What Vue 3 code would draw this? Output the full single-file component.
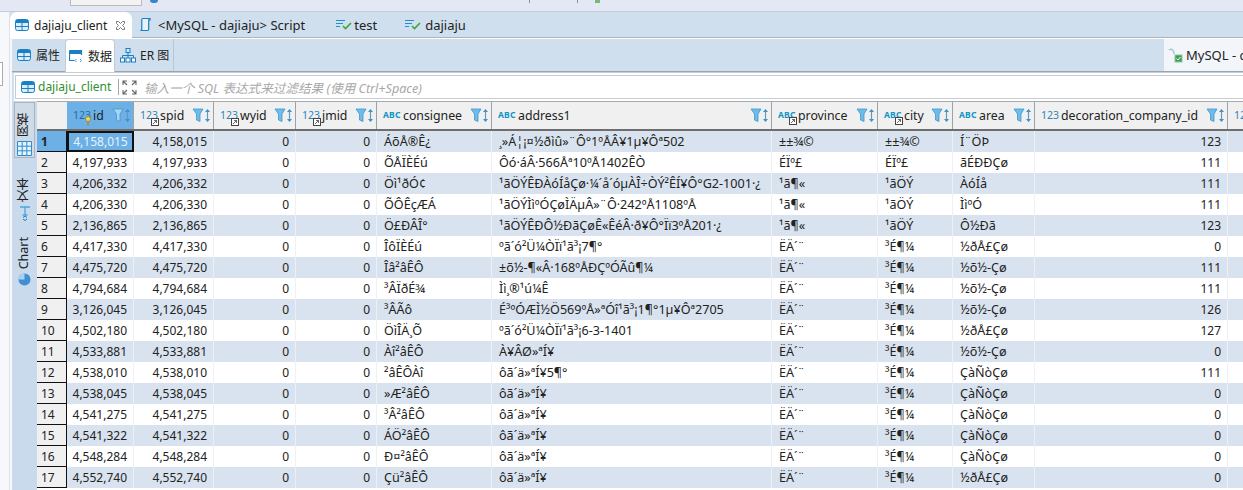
<script setup>
const columns = [
  { name: 'id', type: '123', mark: 'key', width: 67, num: true },
  { name: 'spid', type: '123', mark: 'box', width: 80, num: true },
  { name: 'wyid', type: '123', mark: 'box', width: 82, num: true },
  { name: 'jmid', type: '123', mark: 'box', width: 81, num: true },
  { name: 'consignee', type: 'ABC', width: 115 },
  { name: 'address1', type: 'ABC', width: 280 },
  { name: 'province', type: 'ABC', mark: 'box', width: 106 },
  { name: 'city', type: 'ABC', mark: 'box', width: 75 },
  { name: 'area', type: 'ABC', width: 82 },
  { name: 'decoration_company_id', type: '123', width: 193, num: true }
]
const gridTemplate = '30px ' + columns.map(c => c.width + 'px').join(' ') + ' 60px'

const sc = ['ËÄ´¨', '³É¶¼']
const gz = ['¹ã¶«', '¹ãÖÝ']
const rows = [
  ['4,158,015', 'ÁõÅ®Ê¿', '¸»Á¦¡¤½ðìû»¨Ô°1ºÅÂ¥1µ¥Ôª502', '±±¾©', '±±¾©', 'Í¨ÖÞ', '123'],
  ['4,197,933', 'ÕÅÏÈÉú', 'Ôó·áÂ·566Åª10ºÅ1402ÊÒ', 'ÉÏº£', 'ÉÏº£', 'ãÉÐÐÇø', '111'],
  ['4,206,332', 'Öì¹ðÓ¢', '¹ãÖÝÊÐÀóÍåÇø·¼´å´óµÀÎ÷ÒÝ²ÊÍ¥Ô°G2-1001·¿', ...gz, 'ÀóÍå', '111'],
  ['4,206,330', 'ÕÔÊçÆÁ', '¹ãÖÝÌìºÓÇøÌÄµÂ»¨Ô·242ºÅ1108ºÅ', ...gz, 'ÌìºÓ', '111'],
  ['2,136,865', 'Ö£ÐÂÎ°', '¹ãÖÝÊÐÔ½ÐãÇøÊ«ÊéÂ·ð¥Ô°Ïï3ºÅ201·¿', ...gz, 'Ô½Ðã', '123'],
  ['4,417,330', 'ÎôÏÈÉú', 'ºã´ó²Ü¼ÒÏï¹ã³¡7¶°', ...sc, '½ðÅ£Çø', '0'],
  ['4,475,720', 'Îâ²âÊÔ', '±õ½-¶«Â·168ºÅÐÇºÓÃû¶¼', ...sc, '½õ½-Çø', '111'],
  ['4,794,684', '³ÂÏðÉ¾', 'Ìì¸®¹ú¼Ê', ...sc, '½õ½-Çø', '111'],
  ['3,126,045', '³ÂÃô', 'É³ºÓÆÌ½Ö569ºÅ»ªÓî¹ã³¡1¶°1µ¥Ôª2705', ...sc, '½õ½-Çø', '126'],
  ['4,502,180', 'ÖìÎÄ¸Õ', 'ºã´ó²Ü¼ÒÏï¹ã³¡6-3-1401', ...sc, '½ðÅ£Çø', '127'],
  ['4,533,881', 'Àî²âÊÔ', 'À¥ÂØ»ªÍ¥', ...sc, '½õ½-Çø', '0'],
  ['4,538,010', '²âÊÔÀî', 'ôã´ä»ªÍ¥5¶°', ...sc, 'ÇàÑòÇø', '111'],
  ['4,538,045', '»Æ²âÊÔ', 'ôã´ä»ªÍ¥', ...sc, 'ÇàÑòÇø', '0'],
  ['4,541,275', '³Â²âÊÔ', 'ôã´ä»ªÍ¥', ...sc, 'ÇàÑòÇø', '0'],
  ['4,541,322', 'ÁÖ²âÊÔ', 'ôã´ä»ªÍ¥', ...sc, 'ÇàÑòÇø', '0'],
  ['4,548,284', 'Ð¤²âÊÔ', 'ôã´ä»ªÍ¥', ...sc, 'ÇàÑòÇø', '0'],
  ['4,552,740', 'Çü²âÊÔ', 'ôã´ä»ªÍ¥', ...sc, '½ðÅ£Çø', '0']
]
const tableRows = rows.map(r => [r[0], r[0], '0', '0', r[1], r[2], r[3], r[4], r[5], r[6]])
</script>

<template>
  <div class="page">
    <div class="toolbar">
      <span class="tool-field"></span>
      <span class="tool-dot"></span>
      <span class="tool-sep"></span>
      <span class="tool-sep second"></span>
      <span class="tool-green"></span>
    </div>
    <div class="body">
      <div class="gutter"><span class="gutter-box"></span></div>
      <div class="main">
        <div class="tabs">
          <div class="tab active">
            <svg class="ic" width="14" height="12" viewBox="0 0 14 12"><rect x=".5" y=".5" width="13" height="11" rx="2" fill="#d8ecfa" stroke="#1b7fc4"/><rect x="1" y="1" width="12" height="3" fill="#1b7fc4"/><path d="M1 7.5h12M7 4v7" stroke="#1b7fc4"/></svg>
            <span class="tab-label">dajiaju_client</span>
            <svg class="close" width="11" height="11" viewBox="0 0 11 11"><path d="M1.500 1.500h2l2 2 2-2h2v2l-2 2 2 2v2h-2l-2-2-2 2h-2v-2l2-2-2-2z" fill="none" stroke="#777"/></svg>
          </div>
          <div class="tab script">
            <svg class="ic" width="12" height="15" viewBox="0 0 13 15"><path d="M4 1h8v1.500h-1.500v10a1.500 1.500 0 0 1-1.500 1.500H1.500a1.500 1.500 0 0 0 1.500-1.500V2.500A1.500 1.500 0 0 1 4 1z" fill="#e6f3fb" stroke="#1b7fc4" stroke-width="1.300"/></svg>
            <span>&lt;MySQL - dajiaju&gt; Script</span>
          </div>
          <div class="tab test">
            <svg class="ic" width="16" height="11" viewBox="0 0 16 11"><path d="M0 1.500h9M0 4.500h7M0 7.500h4" stroke="#1f8fd0" stroke-width="1.200"/><path d="M7 7l2.500 2.500L15 4" fill="none" stroke="#3aa53a" stroke-width="1.600"/></svg>
            <span>test</span>
          </div>
          <div class="tab db">
            <svg class="ic" width="16" height="11" viewBox="0 0 16 11"><path d="M0 1.500h9M0 4.500h7M0 7.500h4" stroke="#1f8fd0" stroke-width="1.200"/><path d="M7 7l2.500 2.500L15 4" fill="none" stroke="#3aa53a" stroke-width="1.600"/></svg>
            <span>dajiaju</span>
          </div>
        </div>
        <div class="lower">
          <div class="subtabs">
            <div class="subtab">
              <svg class="ic" width="14" height="12" viewBox="0 0 14 12"><rect x=".5" y=".5" width="13" height="11" rx="2" fill="#d8ecfa" stroke="#1b7fc4"/><rect x="1" y="1" width="12" height="3" fill="#1b7fc4"/><path d="M1 7.500h12M7 4v7" stroke="#1b7fc4"/></svg>
              <span>属性</span>
            </div>
            <div class="subtab current">
              <svg class="ic" width="14" height="13" viewBox="0 0 14 13"><path d="M.5.500h12v4.500M.5.500v10h5" fill="none" stroke="#1b7fc4" stroke-width="1.200"/><rect x="1" y="1" width="11" height="3" fill="#1b7fc4"/><path d="M7.500 9 6 10.500 7.500 12M11 9l1.500 1.500L11 12" fill="none" stroke="#3a9ad9"/></svg>
              <span>数据</span>
            </div>
            <div class="subtab er">
              <svg class="ic" width="16" height="15" viewBox="0 0 16 15"><rect x="6" y=".5" width="4" height="4" fill="#cfe6f7" stroke="#1b7fc4"/><path d="M8 4.500v3M2.500 10V7.500h11V10M8 7.500V10" fill="none" stroke="#1b7fc4"/><rect x=".5" y="10" width="4" height="4" fill="#fff" stroke="#1b7fc4"/><rect x="6" y="10" width="4" height="4" fill="#fff" stroke="#1b7fc4"/><rect x="11.500" y="10" width="4" height="4" fill="#fff" stroke="#1b7fc4"/></svg>
              <span>ER 图</span>
            </div>
            <div class="sub-rest"></div>
            <div class="conn">
              <svg class="ic" width="15" height="15" viewBox="0 0 15 15"><path d="M1 2c3-2 5 0 5 4" fill="none" stroke="#a9c4d4" stroke-width="1.500"/><rect x="7" y="7" width="7" height="7" fill="#3f9f55" stroke="#8fc79c"/><path d="M8.500 10.500l1.500 1.500 2.500-3" fill="none" stroke="#fff"/></svg>
              <span>MySQL - dajiaju</span>
            </div>
          </div>
          <div class="content">
            <div class="filter">
              <svg class="ic" width="14" height="12" viewBox="0 0 14 12"><rect x=".5" y=".5" width="13" height="11" rx="2" fill="#d8ecfa" stroke="#1b7fc4"/><rect x="1" y="1" width="12" height="3" fill="#1b7fc4"/><path d="M1 7.500h12M7 4v7" stroke="#1b7fc4"/></svg>
              <span class="filter-name">dajiaju_client</span>
              <span class="filter-sep"></span>
              <svg class="ic" width="15" height="15" viewBox="0 0 15 15"><path d="M1 5V1h4M10 1h4v4M1 10v4h4M14 10v4h-4M1 1l4 4M14 1l-4 4M1 14l4-4M14 14l-4-4" fill="none" stroke="#666" stroke-width="1.100"/></svg>
              <span class="filter-hint">输入一个 SQL 表达式来过滤结果 (使用 Ctrl+Space)</span>
            </div>
            <div class="grid-area">
              <div class="side">
                <div class="side-tab selected">
                  <svg width="15" height="15" viewBox="0 0 15 15"><path d="M.5.500h14v14H.5zM.5 5.200h14M.5 9.800h14M5.200.500v14M9.800.500v14" fill="#e6f3fb" stroke="#2d8fd0"/></svg>
                  <span class="side-text">网格</span>
                </div>
                <div class="side-tab text-tab">
                  <svg width="12" height="15" viewBox="0 0 12 15"><path d="M1 1h10M6 1v8M3.500 9h5" fill="none" stroke="#4aa5e0" stroke-width="1.300"/><path d="M4 11.500 6 10l2 1.500M4 13l2 1.500L8 13" fill="none" stroke="#2578b5"/></svg>
                  <span class="side-text">文本</span>
                </div>
                <div class="side-tab chart-tab">
                  <svg width="13" height="13" viewBox="0 0 13 13"><circle cx="6.500" cy="6.500" r="6" fill="#3f8fd2"/><path d="M6.500 6.500V.500A6 6 0 0 0 .500 6.500z" fill="#a9d2f0"/></svg>
                  <span class="side-text">Chart</span>
                </div>
              </div>
              <div class="table">
                <div class="row head" :style="{ gridTemplateColumns: gridTemplate }">
                  <div class="corner"></div>
                  <div v-for="(col, c) in columns" :key="col.name" class="hcell" :class="{ focus: c === 0 }">
                    <span class="type" :class="col.type === 'ABC' ? 'abc' : 'num'">{{ col.type }}
                      <svg v-if="col.mark === 'box'" class="mark" width="8" height="8" viewBox="0 0 8 8"><rect x=".5" y=".5" width="7" height="7" fill="#fff" stroke="#444"/><path d="M2 6l3.500-3.500M3 2.500h2.500V5" fill="none" stroke="#444" stroke-width=".8"/></svg>
                      <svg v-if="col.mark === 'key'" class="mark" width="8" height="10" viewBox="0 0 8 10"><circle cx="4" cy="3" r="2.500" fill="#f0d36a" stroke="#a68a2c"/><path d="M4 5.500V9.500" stroke="#a68a2c" stroke-width="1.400"/></svg>
                    </span>
                    <span class="hname">{{ col.name }}</span>
                    <svg class="hicons" width="19" height="15" viewBox="0 0 19 15"><path d="M1 1h10L8 6v7.500L4.500 12V6z" :fill="c === 0 ? '#a8d4f2' : '#6fbce8'" stroke="#3d97cf" stroke-width=".8"/><path d="M15.500 1l2.500 3h-5zM15.500 14l2.500-3h-5z" fill="#3d8fc4"/><path d="M15.500 3.500v8" stroke="#5a9cc4" stroke-width="1.200"/></svg>
                  </div>
                  <div class="hcell extra"><span class="type num">123</span></div>
                </div>
                <div
                  v-for="(row, r) in tableRows"
                  :key="r"
                  class="row"
                  :class="{ stripe: r % 2 === 0 }"
                  :style="{ gridTemplateColumns: gridTemplate }"
                >
                  <div class="rownum" :class="{ on: r === 0 }">{{ r + 1 }}</div>
                  <div
                    v-for="(value, c) in row"
                    :key="c"
                    class="cell"
                    :class="{ right: columns[c].num, text: !columns[c].num, sel: r === 0 && c === 0 }"
                  >{{ value }}</div>
                  <div class="cell"></div>
                </div>
              </div>
            </div>
          </div>
        </div>
      </div>
    </div>
  </div>
</template>

<style>
html, body { margin: 0; padding: 0; overflow: hidden; }
</style>

<style scoped>
.page {
  width: 1243px;
  height: 490px;
  overflow: hidden;
  display: flex;
  flex-direction: column;
  background: #e4e8f4;
  font-family: "Noto Sans", "Noto Sans CJK SC", sans-serif;
  font-size: 12px;
  color: #222;
}
.toolbar {
  height: 11px;
  flex: none;
  display: flex;
  align-items: flex-start;
  border-bottom: 1px solid #c3ccdc;
}
.tool-field {
  width: 70px;
  height: 5px;
  margin-left: 70px;
  background: #f3f3f3;
  border: 1px solid #bbb;
  border-top: 0;
}
.tool-dot {
  width: 8px;
  height: 3px;
  margin-left: 8px;
  background: #3a86c8;
  border-radius: 0 0 5px 5px;
}
.tool-sep {
  width: 1px;
  height: 3px;
  margin-left: 371px;
  background: #8a8f98;
}
.tool-sep.second { margin-left: 47px; }
.tool-green {
  width: 5px;
  height: 3px;
  margin-left: 17px;
  background: #7ab87a;
}
.body {
  flex: 1;
  min-height: 0;
  display: flex;
  background: #f7f8fb;
}
.gutter {
  width: 9px;
  flex: none;
  border-right: 1px solid #dde2ea;
}
.gutter-box {
  display: block;
  width: 2px;
  height: 22px;
  margin-top: 50px;
  border: 1px solid #aaa;
  border-left: 0;
  background: #fff;
}
.main {
  flex: 1;
  min-width: 0;
  display: flex;
  flex-direction: column;
}
.tabs {
  height: 26px;
  flex: none;
  display: flex;
  align-items: stretch;
  background: #cfdfee;
  border-bottom: 1px solid #aab4be;
  box-sizing: border-box;
  font-size: 13px;
}
.tab {
  display: flex;
  align-items: center;
  gap: 6px;
  color: #222;
}
.tab.active {
  width: 122px;
  box-sizing: border-box;
  padding-left: 5px;
  gap: 5px;
  background: #fff;
  border-radius: 7px 7px 0 0;
  margin-bottom: -1px;
  position: relative;
}
.tab-label { width: 73px; font-size: 12px; white-space: nowrap; }
.close { margin-left: 3px; }
.tab.script { margin-left: 7px; gap: 7px; }
.tab.test { margin-left: 31px; gap: 2px; }
.tab.db { margin-left: 28px; gap: 4px; }
.ic { flex: none; }
.lower {
  flex: 1;
  min-height: 0;
  display: flex;
  flex-direction: column;
  margin-left: 2px;
  padding-top: 1px;
  background: #fff;
}
.subtabs {
  height: 33px;
  flex: none;
  box-sizing: border-box;
  display: flex;
  align-items: stretch;
  background: #cfdfee;
  border-bottom: 1px solid #9aa4ae;
}
.subtab {
  display: flex;
  align-items: center;
  gap: 5px;
  padding-left: 5px;
  width: 53px;
  box-sizing: border-box;
}
.subtab.current {
  width: 50px;
  padding-left: 3px;
  gap: 5px;
  background: #fff;
  border-radius: 4px 4px 0 0;
  border: 1px solid #c2ccd6;
  border-bottom: 0;
  margin-bottom: -1px;
}
.subtab.er {
  width: 59px;
  padding-left: 5px;
  gap: 4px;
  border-right: 1px solid #b8c6d4;
}
.sub-rest { flex: 1; }
.conn {
  width: 79px;
  flex: none;
  display: flex;
  align-items: center;
  gap: 3px;
  padding-left: 4px;
  box-sizing: border-box;
  background: #f2f5fa;
  white-space: nowrap;
  overflow: hidden;
  font-size: 13px;
}
.content {
  flex: 1;
  min-height: 0;
  display: flex;
  flex-direction: column;
  padding-top: 2px;
  background: linear-gradient(90deg, #cfdfee 2px, #fff 2px);
  border-top: 1px solid #c4ccd6;
}
.filter {
  height: 24px;
  flex: none;
  margin-left: 3px;
  box-sizing: border-box;
  display: flex;
  align-items: center;
  padding-left: 5px;
  background: #fff;
  border: 1px solid #c6ccd4;
  border-right: 0;
}
.filter-name {
  width: 73px;
  margin-left: 3px;
  color: #2f8f2f;
  font-size: 12px;
  white-space: nowrap;
  line-height: 1;
}
.filter-sep {
  width: 1px;
  height: 16px;
  margin: 0 3px 0 7px;
  background: #9aa;
}
.filter-hint {
  margin-left: 7px;
  color: #a8a8a8;
  font-size: 12.600px;
  font-style: italic;
  white-space: nowrap;
}
.grid-area {
  flex: 1;
  min-height: 0;
  display: flex;
  margin-top: 2px;
  background: #fff;
}
.side {
  width: 25px;
  flex: none;
  box-sizing: border-box;
  padding: 1px 2px 0 2px;
  background: #c9daec;
  display: flex;
  flex-direction: column;
}
.side-tab {
  display: flex;
  flex-direction: column-reverse;
  align-items: center;
  gap: 4px;
}
.side-tab.selected {
  height: 56px;
  box-sizing: border-box;
  padding-bottom: 1px;
  background: #cfdbe6;
  border: 1px solid #a8b4c0;
}
.text-tab { margin-top: 19px; }
.chart-tab { margin-top: 16px; }
.side-text {
  writing-mode: vertical-rl;
  transform: rotate(180deg);
  font-size: 12.500px;
  line-height: 1;
  color: #222;
}
.table {
  flex: 1;
  min-width: 0;
  overflow: hidden;
}
.row {
  display: grid;
  height: 21px;
}
.row.head {
  height: 30px;
  box-sizing: border-box;
  background: #f0f0f0;
  border-top: 1px solid #a8a8a8;
  border-bottom: 2px solid #6e6e6e;
}
.corner {
  background: #f0f0f0;
}
.hcell {
  display: flex;
  align-items: center;
  box-sizing: border-box;
  padding-left: 6px;
  padding-right: 2px;
  border-right: 1px solid #9aa2aa;
  font-size: 12.300px;
  min-width: 0;
  white-space: nowrap;
}
.hcell.focus {
  background: #6cb0e6;
}
.hcell.extra { border-right: 0; }
.type {
  position: relative;
  flex: none;
  width: 20px;
  line-height: 1;
}
.type.num {
  color: #2a86c0;
  font-size: 10.500px;
}
.focus .type.num { color: #1e6fa8; }
.type.abc {
  color: #0f95c6;
  font-size: 8.500px;
  font-weight: 700;
  letter-spacing: .2px;
}
.mark {
  position: absolute;
  right: 1px;
  bottom: -5px;
}
.hname { flex: 1; min-width: 0; }
.hicons { flex: none; }
.rownum {
  display: flex;
  align-items: center;
  padding-left: 4px;
  background: #f0f0f0;
  border-right: 1px solid #111;
  border-bottom: 1px solid #111;
}
.rownum.on {
  background: #6cb0e6;
  font-weight: 700;
}
.cell {
  display: flex;
  align-items: center;
  box-sizing: border-box;
  padding: 0 6px 0 7px;
  border-right: 1px solid #eef2f6;
  white-space: nowrap;
  overflow: hidden;
}
.cell.text { font-size: 12.600px; }
.stripe .cell {
  background: #d9e3ef;
  border-right-color: #eaf0f6;
}
.cell.right { justify-content: flex-end; }
.cell.sel {
  justify-content: center;
  padding: 0;
  background: #6cb0e6;
  color: #e8f2fb;
  border: 2px solid #111;
}
</style>
